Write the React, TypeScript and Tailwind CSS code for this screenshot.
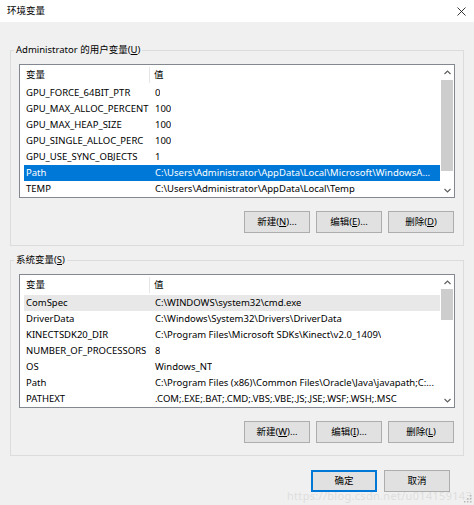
import React from "react";

type Row = { name: string; value: string; state?: "selected" | "inactive" };

const userVars: Row[] = [
  { name: "GPU_FORCE_64BIT_PTR", value: "0" },
  { name: "GPU_MAX_ALLOC_PERCENT", value: "100" },
  { name: "GPU_MAX_HEAP_SIZE", value: "100" },
  { name: "GPU_SINGLE_ALLOC_PERC", value: "100" },
  { name: "GPU_USE_SYNC_OBJECTS", value: "1" },
  {
    name: "Path",
    value: "C:\\Users\\Administrator\\AppData\\Local\\Microsoft\\WindowsA...",
    state: "selected",
  },
  { name: "TEMP", value: "C:\\Users\\Administrator\\AppData\\Local\\Temp" },
];

const systemVars: Row[] = [
  { name: "ComSpec", value: "C:\\WINDOWS\\system32\\cmd.exe", state: "inactive" },
  { name: "DriverData", value: "C:\\Windows\\System32\\Drivers\\DriverData" },
  { name: "KINECTSDK20_DIR", value: "C:\\Program Files\\Microsoft SDKs\\Kinect\\v2.0_1409\\" },
  { name: "NUMBER_OF_PROCESSORS", value: "8" },
  { name: "OS", value: "Windows_NT" },
  {
    name: "Path",
    value: "C:\\Program Files (x86)\\Common Files\\Oracle\\Java\\javapath;C:...",
  },
  { name: "PATHEXT", value: ".COM;.EXE;.BAT;.CMD;.VBS;.VBE;.JS;.JSE;.WSF;.WSH;.MSC" },
];

function Chevron({ up }: { up?: boolean }) {
  return (
    <svg width="7" height="5" viewBox="0 0 7 5" className="block">
      <polyline
        points={up ? "0.5,4 3.5,1 6.5,4" : "0.5,1 3.5,4 6.5,1"}
        fill="none"
        stroke="#606060"
        strokeWidth="1.2"
      />
    </svg>
  );
}

function ScrollBar({ spacer, thumb }: { spacer: string; thumb: string }) {
  return (
    <div className="w-[14px] flex flex-col bg-white">
      <div className="h-[14px] flex items-center justify-center">
        <Chevron up />
      </div>
      <div className="flex-1 flex flex-col items-center">
        <div className={spacer} />
        <div className={`w-[12px] bg-[#cdcdcd] ${thumb}`} />
      </div>
      <div className="h-[14px] flex items-center justify-center">
        <Chevron />
      </div>
    </div>
  );
}

function VarList({ rows, spacer, thumb }: { rows: Row[]; spacer: string; thumb: string }) {
  return (
    <div className="w-[436px] h-[134px] border border-[#828790] bg-white flex">
      <div className="flex-1 pl-[4px] flex flex-col overflow-hidden">
        <div className="h-[20px] flex items-center">
          <div className="w-[126px] pl-[2px] h-[16px] border-r border-[#e5e5e5] flex items-center">变量</div>
          <div className="pl-[4px]">值</div>
        </div>
        {rows.map((r) => (
          <div
            key={r.name}
            className={`h-[16px] flex items-center whitespace-nowrap ${
              r.state === "selected"
                ? "bg-[#0078d7] text-white"
                : r.state === "inactive"
                ? "bg-[#e8e8e8]"
                : ""
            }`}
          >
            <div className="w-[126px] pl-[2px] shrink-0 overflow-hidden">{r.name}</div>
            <div className="pl-[5px] overflow-hidden">{r.value}</div>
          </div>
        ))}
      </div>
      <ScrollBar spacer={spacer} thumb={thumb} />
    </div>
  );
}

function Btn({ children, primary }: { children: React.ReactNode; primary?: boolean }) {
  return (
    <div
      className={`w-[66px] h-[22px] flex items-center justify-center bg-[#e1e1e1] ${
        primary ? "border-2 border-[#0078d7]" : "border border-[#adadad]"
      }`}
    >
      {children}
    </div>
  );
}

function Group({
  title,
  rows,
  spacer,
  thumb,
  buttons,
  className,
}: {
  title: React.ReactNode;
  rows: Row[];
  spacer: string;
  thumb: string;
  buttons: React.ReactNode[];
  className: string;
}) {
  return (
    <fieldset className={`mx-[10px] border border-[#dcdcdc] pl-[8px] pb-[12px] ${className}`}>
      <legend className="ml-[-5px] px-[2px] leading-[16px]">{title}</legend>
      <div className="mt-[6px]">
        <VarList rows={rows} spacer={spacer} thumb={thumb} />
      </div>
      <div className="mt-[13px] flex justify-end pr-[9px] gap-[6px]">
        {buttons.map((b, i) => (
          <Btn key={i}>{b}</Btn>
        ))}
      </div>
    </fieldset>
  );
}

export default function App() {
  return (
    <div className="relative w-[474px] h-[505px] overflow-hidden bg-[#f0f0f0] text-black text-[9.5px] leading-[16px] font-['Noto_Sans','Noto_Sans_CJK_SC',sans-serif]">
      <div className="h-[22px] bg-white flex items-center justify-between pl-[7px] pr-[8px]">
        <span>环境变量</span>
        <svg width="9" height="9" viewBox="0 0 9 9">
          <path d="M0.5 0.5 L8.5 8.5 M8.5 0.5 L0.5 8.5" stroke="#202020" strokeWidth="0.9" />
        </svg>
      </div>

      <Group
        className="mt-[20px]"
        title={
          <>
            Administrator 的用户变量(<span className="underline">U</span>)
          </>
        }
        rows={userVars}
        spacer="h-[1px]"
        thumb="h-[91px]"
        buttons={[
          <>新建(<span className="underline">N</span>)...</>,
          <>编辑(<span className="underline">E</span>)...</>,
          <>删除(<span className="underline">D</span>)</>,
        ]}
      />

      <Group
        className="mt-[6px]"
        title={
          <>
            系统变量(<span className="underline">S</span>)
          </>
        }
        rows={systemVars}
        spacer="h-[0px]"
        thumb="h-[31px]"
        buttons={[
          <>新建(<span className="underline">W</span>)...</>,
          <>编辑(<span className="underline">I</span>)...</>,
          <>删除(<span className="underline">L</span>)</>,
        ]}
      />

      <div className="mt-[14px] flex justify-end pr-[24px] gap-[7px]">
        <Btn primary>确定</Btn>
        <Btn>取消</Btn>
      </div>

      {/* faint blog watermark across the bottom-right corner */}
      <div className="absolute left-[287px] top-[490px] text-[11px] leading-[12px] text-[#dedede] tracking-[0.3px] pointer-events-none">
        https://blog.csdn.net/u014159143
      </div>

      <svg className="absolute right-[2px] bottom-[2px]" width="8" height="8" viewBox="0 0 8 8">
        <rect x="6" y="0" width="1.5" height="1.5" fill="#b8b8b8" />
        <rect x="3" y="3" width="1.5" height="1.5" fill="#b8b8b8" />
        <rect x="6" y="3" width="1.5" height="1.5" fill="#b8b8b8" />
        <rect x="0" y="6" width="1.5" height="1.5" fill="#b8b8b8" />
        <rect x="3" y="6" width="1.5" height="1.5" fill="#b8b8b8" />
        <rect x="6" y="6" width="1.5" height="1.5" fill="#b8b8b8" />
      </svg>
    </div>
  );
}
